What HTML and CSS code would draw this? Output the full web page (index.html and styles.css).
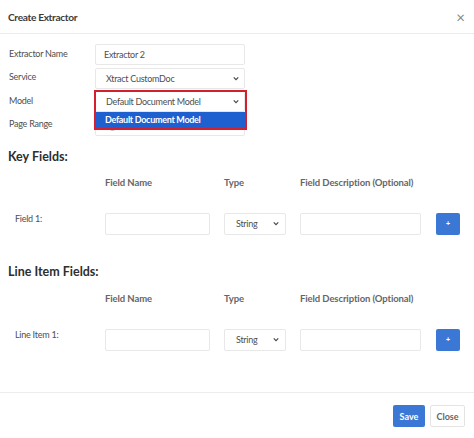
FILE: index.html
```html
<html>
  <head>
    <meta http-equiv="content-type" content="text/html; charset=utf-8" />
    <link rel="stylesheet" href="styles.css">
  </head>
  <body>
    <div class="modal">
      <div class="modal-header">
        <span class="modal-title">Create Extractor</span>
        <span class="close-x">&times;</span>
      </div>
      <div class="modal-body">
        <div class="form-row">
          <label>Extractor Name</label>
          <div class="txt">Extractor 2</div>
        </div>
        <div class="form-row">
          <label>Service</label>
          <div class="sel">Xtract CustomDoc<svg class="chev" viewBox="0 0 8 6"><path d="M1 1.5 L4 4.5 L7 1.5" /></svg></div>
        </div>
        <div class="form-row">
          <label>Model</label>
          <div class="model-wrap">
            <div class="sel">Default Document Model<svg class="chev" viewBox="0 0 8 6"><path d="M1 1.5 L4 4.5 L7 1.5" /></svg></div>
            <div class="dropdown">Default Document Model</div>
            <div class="highlight"></div>
          </div>
        </div>
        <div class="form-row">
          <label>Page Range</label>
          <div class="txt placeholder">e.g. 1-3, 5, 7-9</div>
        </div>

        <h3 class="section-title first">Key Fields:</h3>
        <div class="field-grid">
          <span></span>
          <span class="col-head">Field Name</span>
          <span class="col-head">Type</span>
          <span class="col-head">Field Description (Optional)</span>
          <span></span>
        </div>
        <div class="field-grid field-row">
          <span class="row-label">Field 1:</span>
          <div class="txt"></div>
          <div class="sel small">String<svg class="chev" viewBox="0 0 8 6"><path d="M1 1.5 L4 4.5 L7 1.5" /></svg></div>
          <div class="txt"></div>
          <button class="btn-add">+</button>
        </div>

        <h3 class="section-title second">Line Item Fields:</h3>
        <div class="field-grid head-2">
          <span></span>
          <span class="col-head">Field Name</span>
          <span class="col-head">Type</span>
          <span class="col-head">Field Description (Optional)</span>
          <span></span>
        </div>
        <div class="field-grid field-row">
          <span class="row-label">Line Item 1:</span>
          <div class="txt"></div>
          <div class="sel small">String<svg class="chev" viewBox="0 0 8 6"><path d="M1 1.5 L4 4.5 L7 1.5" /></svg></div>
          <div class="txt"></div>
          <button class="btn-add">+</button>
        </div>
      </div>
      <div class="modal-footer">
        <button class="btn btn-save">Save</button>
        <button class="btn btn-close">Close</button>
      </div>
    </div>
  </body>
</html>
```

FILE: styles.css
```css
body {
  margin: 0;
  padding: 0;
  background: #fff;
  font-family: Lato, "Noto Sans", sans-serif;
  color: #555;
}
.modal {
  width: 474px;
  height: 438px;
}
.modal-header {
  height: 33px;
  border-bottom: 1px solid #ececec;
  display: flex;
  align-items: center;
  justify-content: space-between;
  padding: 0 8px 0 8px;
}
.modal-title {
  font-size: 10.2px;
  font-weight: 700;
  letter-spacing: -0.35px;
  color: #3a3a3a;
}
.close-x {
  font-size: 15px;
  color: #888;
  margin-right: 1px;
}
.modal-body {
  padding: 10px 0 0 0;
  height: 348px;
  border-bottom: 1px solid #ececec;
}
.form-row {
  display: flex;
  align-items: center;
  margin-bottom: 2.5px;
}
.form-row label {
  width: 86px;
  padding-left: 9px;
  font-size: 9px;
  letter-spacing: -0.25px;
  color: #4e4e4e;
  margin-top: -3px;
}
.txt, .sel {
  box-sizing: border-box;
  height: 21px;
  border: 1px solid #e8e8e8;
  border-radius: 2px;
  font-size: 9px;
  letter-spacing: -0.28px;
  color: #4e4e4e;
  display: flex;
  align-items: center;
  padding: 0 8px;
  background: #fff;
}
.form-row .txt, .form-row .sel {
  width: 150px;
}
.sel {
  justify-content: space-between;
  padding: 0 5px 0 10px;
}
.sel.small {
  padding: 0 6px 0 11px;
}
.chev {
  width: 6px;
  height: 5px;
  fill: none;
  stroke: #444;
  stroke-width: 1.5;
}
.placeholder {
  color: #bbb;
}
.model-wrap {
  position: relative;
}
.dropdown {
  position: absolute;
  left: 0;
  top: 21px;
  width: 150px;
  height: 16px;
  box-sizing: border-box;
  background: #1f60d0;
  color: #fff;
  font-size: 9px;
  font-weight: 700;
  letter-spacing: -0.3px;
  padding-left: 10px;
  line-height: 16px;
  box-shadow: 0 1px 2px rgba(0,0,0,0.2);
  z-index: 2;
}
.highlight {
  position: absolute;
  left: -1px;
  top: -1px;
  width: 153px;
  height: 40px;
  box-sizing: border-box;
  border: 2px solid #d3202e;
  z-index: 3;
}
.section-title {
  margin: 13px 0 0 8px;
  font-size: 12.5px;
  font-weight: 700;
  color: #2e2e2e;
}
.section-title.second {
  margin-top: 29px;
}
.field-grid {
  display: grid;
  grid-template-columns: 91px 105px 62px 121px 24px;
  column-gap: 14px;
  align-items: center;
  margin-top: 13px;
}
.field-grid.head-2 {
  margin-top: 14px;
}
.field-grid .btn-add {
  margin-left: 1px;
}
.col-head {
  font-size: 9.5px;
  font-weight: 700;
  letter-spacing: -0.1px;
  color: #666;
  white-space: nowrap;
}
.field-row {
  margin-top: 25px;
  height: 22px;
}
.field-row .txt, .field-row .sel {
  height: 22px;
}
.row-label {
  padding-left: 15px;
  font-size: 9px;
  letter-spacing: -0.25px;
  color: #4e4e4e;
  margin-top: -10px;
  white-space: nowrap;
}
.btn-add {
  width: 24px;
  height: 22px;
  border: none;
  border-radius: 2px;
  background: #3b78d6;
  color: #fff;
  font-size: 7px;
  font-weight: 700;
  padding: 0;
}
.modal-footer {
  display: flex;
  justify-content: flex-end;
  padding: 12px 9px 0 0;
  gap: 5px;
}
.btn {
  height: 22px;
  border-radius: 2px;
  font-family: Lato, "Noto Sans", sans-serif;
  font-size: 9px;
  font-weight: 700;
  padding: 0 8px;
}
.btn-save {
  width: 32px;
  padding: 0;
  background: #3b78d6;
  border: none;
  color: #fff;
}
.btn-close {
  width: 35px;
  padding: 0;
  background: #fff;
  border: 1px solid #e4e4e4;
  color: #666;
}
```
